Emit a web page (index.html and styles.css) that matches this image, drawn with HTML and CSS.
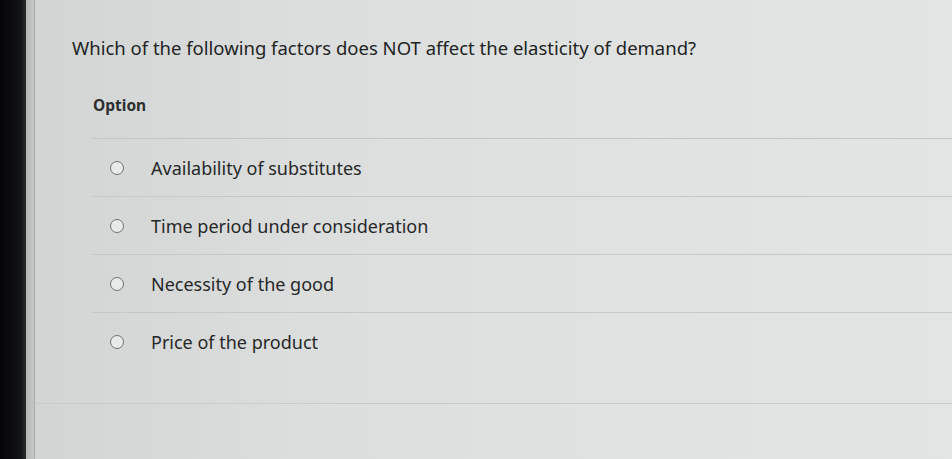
FILE: index.html
```html
<!DOCTYPE html>
<html>
<head>
<meta charset="utf-8">
<link rel="stylesheet" href="styles.css">
</head>
<body>
<div class="screen">
  <div class="bezel"></div>
  <div class="edge"></div>
  <main class="panel">
    <h1 class="question">Which of the following factors does NOT affect the elasticity of demand?</h1>
    <section class="options">
      <div class="options-head">Option</div>
      <ul class="option-list">
        <li class="option"><span class="radio"></span><span class="label">Availability of substitutes</span></li>
        <li class="option"><span class="radio"></span><span class="label">Time period under consideration</span></li>
        <li class="option"><span class="radio"></span><span class="label">Necessity of the good</span></li>
        <li class="option"><span class="radio"></span><span class="label">Price of the product</span></li>
      </ul>
    </section>
    <div class="footer-rule"></div>
  </main>
</div>
</body>
</html>
```

FILE: styles.css
```css
* { box-sizing: border-box; }
html, body { margin: 0; padding: 0; }
body {
  width: 952px;
  height: 459px;
  overflow: hidden;
  background: #0a0a0c;
  font-family: "Noto Sans", "Open Sans", sans-serif;
  color: #262828;
}
.screen {
  display: flex;
  height: 459px;
}
.bezel {
  width: 26px;
  background: linear-gradient(90deg, #050507 0%, #121316 80%, #2a2c2e 100%);
}
.edge {
  width: 9px;
  background: linear-gradient(90deg, #b4b6b5, #c6c8c7);
  border-right: 1px solid #a9abaa;
}
.panel {
  flex: 1;
  display: flex;
  flex-direction: column;
  background: linear-gradient(90deg, #d3d5d4 0%, #dcdedd 30%, #e0e2e1 60%, #e3e5e4 100%);
  padding: 0 0 0 37px;
}
.question {
  margin: 35px 0 0 0;
  font-size: 18.5px;
  font-weight: 400;
  line-height: 26px;
  color: #222424;
}
.options {
  margin-top: 34px;
  padding-left: 20px;
}
.options-head {
  font-size: 15.5px;
  font-weight: 700;
  line-height: 20px;
  color: #2c2e2e;
  padding-left: 1px;
  height: 43px;
}
.option-list {
  list-style: none;
  margin: 0;
  padding: 0;
  border-top: 1px solid #c4c6c5;
}
.option {
  display: flex;
  align-items: center;
  height: 58px;
  border-bottom: 1px solid #c6c8c7;
  padding-left: 18px;
}
.option:last-child { border-bottom: none; }
.radio {
  width: 14px;
  height: 14px;
  border: 1.5px solid #6f7170;
  border-radius: 50%;
  background: #e8eae9;
  flex: none;
}
.label {
  margin-left: 27px;
  font-size: 18px;
  color: #262828;
}
.footer-rule {
  margin-top: 32px;
  margin-left: -37px;
  border-top: 1px solid #c9cbca;
}
```
